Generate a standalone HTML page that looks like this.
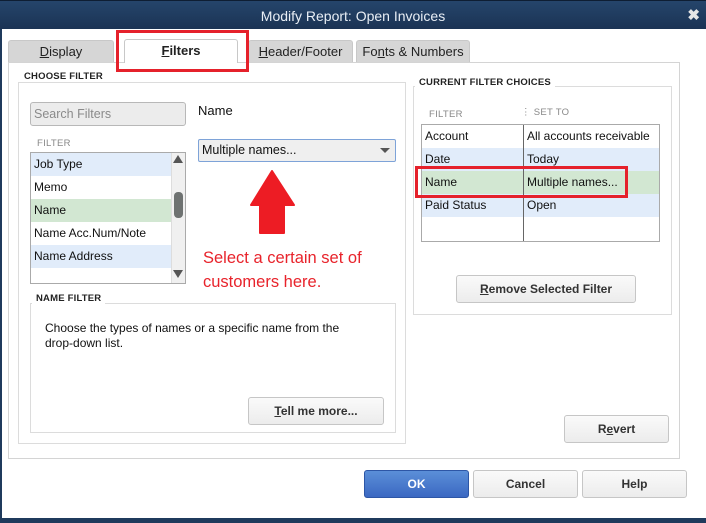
<!DOCTYPE html>
<html><head><style>
*{box-sizing:border-box;margin:0;padding:0}
body{width:706px;height:523px;position:relative;overflow:hidden;background:#fff;font-family:"Liberation Sans",sans-serif;font-size:12px;color:#111}
.a{position:absolute}
.title{left:0;top:0;width:706px;height:29px;background:linear-gradient(#25456b,#1b3354);color:#e8eef5;font-size:14px;text-align:center;line-height:31px;border-top:1px solid #0e1e33}
.tab{position:absolute;top:40px;height:22px;background:#d6d6d6;border:1px solid #c8c8c8;border-bottom:none;border-radius:3px 3px 0 0;text-align:center;font-size:13px;line-height:21px;color:#222}
.grp{position:absolute;border:1px solid #dcdcdc}
.lbl{position:absolute;background:#fff;font-size:9.5px;font-weight:bold;padding:0 4px;color:#222;letter-spacing:.2px}
.btn{position:absolute;border:1px solid #c6c6c6;border-radius:3px;background:linear-gradient(#fafafa,#ececec);text-align:center;font-weight:bold;font-size:12px;color:#333}
.row{position:absolute;left:0;height:23px;line-height:23px;padding-left:3px;font-size:12px}
.red{position:absolute;border:3px solid #e5212b}
</style></head><body>
<div class="a title">Modify Report: Open Invoices</div>
<div class="a" style="right:6px;top:6px;color:#e6e6e6;font-weight:bold;font-size:15px">✖</div>
<div class="a" style="left:0;top:29px;width:2px;height:494px;background:#1f3a5c"></div>
<div class="a" style="left:0;top:518px;width:706px;height:5px;background:#1f3a5c"></div>

<div class="a" style="left:8px;top:62px;width:672px;height:397px;border:1px solid #d4d4d4"></div>
<div class="tab" style="left:8px;width:106px"><u>D</u>isplay</div>
<div class="tab" style="left:124px;width:114px;top:39px;height:24px;background:#fff;font-weight:bold"><u>F</u>ilters</div>
<div class="tab" style="left:248px;width:105px"><u>H</u>eader/Footer</div>
<div class="tab" style="left:356px;width:114px">Fo<u>n</u>ts &amp; Numbers</div>
<div class="red" style="left:116px;top:30px;width:133px;height:42px"></div>

<div class="grp" style="left:18px;top:82px;width:388px;height:362px"></div>
<div class="lbl" style="left:20px;top:71px">CHOOSE FILTER</div>
<div class="a" style="left:30px;top:102px;width:156px;height:24px;border:1px solid #b8b8b8;border-radius:3px;background:#ececec;color:#8a8a8a;padding:4px 3px;font-size:12.5px">Search Filters</div>
<div class="a" style="left:198px;top:103px;font-size:13px">Name</div>
<div class="a" style="left:37px;top:138px;font-size:9.5px;color:#888;letter-spacing:.3px">FILTER</div>
<div class="a" style="left:30px;top:152px;width:156px;height:132px;border:1px solid #aaa;overflow:hidden">
 <div class="row" style="top:0;width:140px;background:#e1ecfa">Job Type</div>
 <div class="row" style="top:23px;width:140px">Memo</div>
 <div class="row" style="top:46px;width:140px;background:#d2e7d2">Name</div>
 <div class="row" style="top:69px;width:140px">Name Acc.Num/Note</div>
 <div class="row" style="top:92px;width:140px;background:#e1ecfa">Name Address</div>
 <div class="a" style="left:140px;top:0;width:15px;height:131px;background:#f0f0f0;border-left:1px solid #ddd"></div>
 <div class="a" style="left:142px;top:2px;width:0;height:0;border-left:5px solid transparent;border-right:5px solid transparent;border-bottom:8px solid #555"></div>
 <div class="a" style="left:142px;top:117px;width:0;height:0;border-left:5px solid transparent;border-right:5px solid transparent;border-top:8px solid #555"></div>
 <div class="a" style="left:143px;top:39px;width:9px;height:26px;background:#6e7271;border-radius:4px"></div>
</div>
<div class="a" style="left:198px;top:139px;width:198px;height:23px;border:1px solid #7ea3d8;border-radius:2px;background:#efefef;padding:3px 3px;font-size:12.5px">Multiple names...</div>
<div class="a" style="left:380px;top:148px;border-left:5px solid transparent;border-right:5px solid transparent;border-top:5px solid #555"></div>
<svg class="a" style="left:248px;top:168px" width="50" height="68"><path d="M24 3 L46 37 L36 37 L36 65 L12 65 L12 37 L3 37 Z" fill="#ed1c24" stroke="#ed1c24" stroke-linejoin="round" stroke-width="2"/></svg>
<div class="a" style="left:203px;top:246px;color:#e8232b;font-size:16.5px;line-height:24px">Select a certain set of<br>customers here.</div>

<div class="grp" style="left:30px;top:303px;width:366px;height:130px"></div>
<div class="lbl" style="left:32px;top:293px">NAME FILTER</div>
<div class="a" style="left:45px;top:321px;font-size:12px;line-height:15px">Choose the types of names or a specific name from the<br>drop-down list.</div>
<div class="btn" style="left:248px;top:397px;width:136px;height:28px;line-height:26px"><u>T</u>ell me more...</div>

<div class="grp" style="left:413px;top:86px;width:259px;height:229px"></div>
<div class="lbl" style="left:415px;top:77px">CURRENT FILTER CHOICES</div>
<div class="a" style="left:429px;top:109px;font-size:9.5px;color:#888;letter-spacing:.3px">FILTER</div>
<div class="a" style="left:521px;top:107px;font-size:9.5px;color:#888;letter-spacing:.3px">⋮ SET TO</div>
<div class="a" style="left:421px;top:124px;width:239px;height:118px;border:1px solid #aaa;overflow:hidden">
 <div class="row" style="top:0;width:238px">Account</div>
 <div class="row" style="top:23px;width:238px;background:#e1ecfa">Date</div>
 <div class="row" style="top:46px;width:238px;background:#d2e7d2">Name</div>
 <div class="row" style="top:69px;width:238px;background:#e1ecfa">Paid Status</div>
 <div class="row" style="top:0;left:102px">All accounts receivable</div>
 <div class="row" style="top:23px;left:102px">Today</div>
 <div class="row" style="top:46px;left:102px">Multiple names...</div>
 <div class="row" style="top:69px;left:102px">Open</div>
 <div class="a" style="left:101px;top:0;width:1px;height:117px;background:#666"></div>
</div>
<div class="red" style="left:415px;top:166px;width:213px;height:32px"></div>
<div class="btn" style="left:456px;top:275px;width:180px;height:28px;line-height:26px"><u>R</u>emove Selected Filter</div>
<div class="btn" style="left:564px;top:415px;width:105px;height:28px;line-height:26px">R<u>e</u>vert</div>

<div class="btn" style="left:364px;top:470px;width:105px;height:28px;line-height:26px;background:linear-gradient(#5b8fd8,#3b68c2);border-color:#2d56a6;color:#fff">OK</div>
<div class="btn" style="left:473px;top:470px;width:105px;height:28px;line-height:26px">Cancel</div>
<div class="btn" style="left:582px;top:470px;width:105px;height:28px;line-height:26px">Help</div>
</body></html>
